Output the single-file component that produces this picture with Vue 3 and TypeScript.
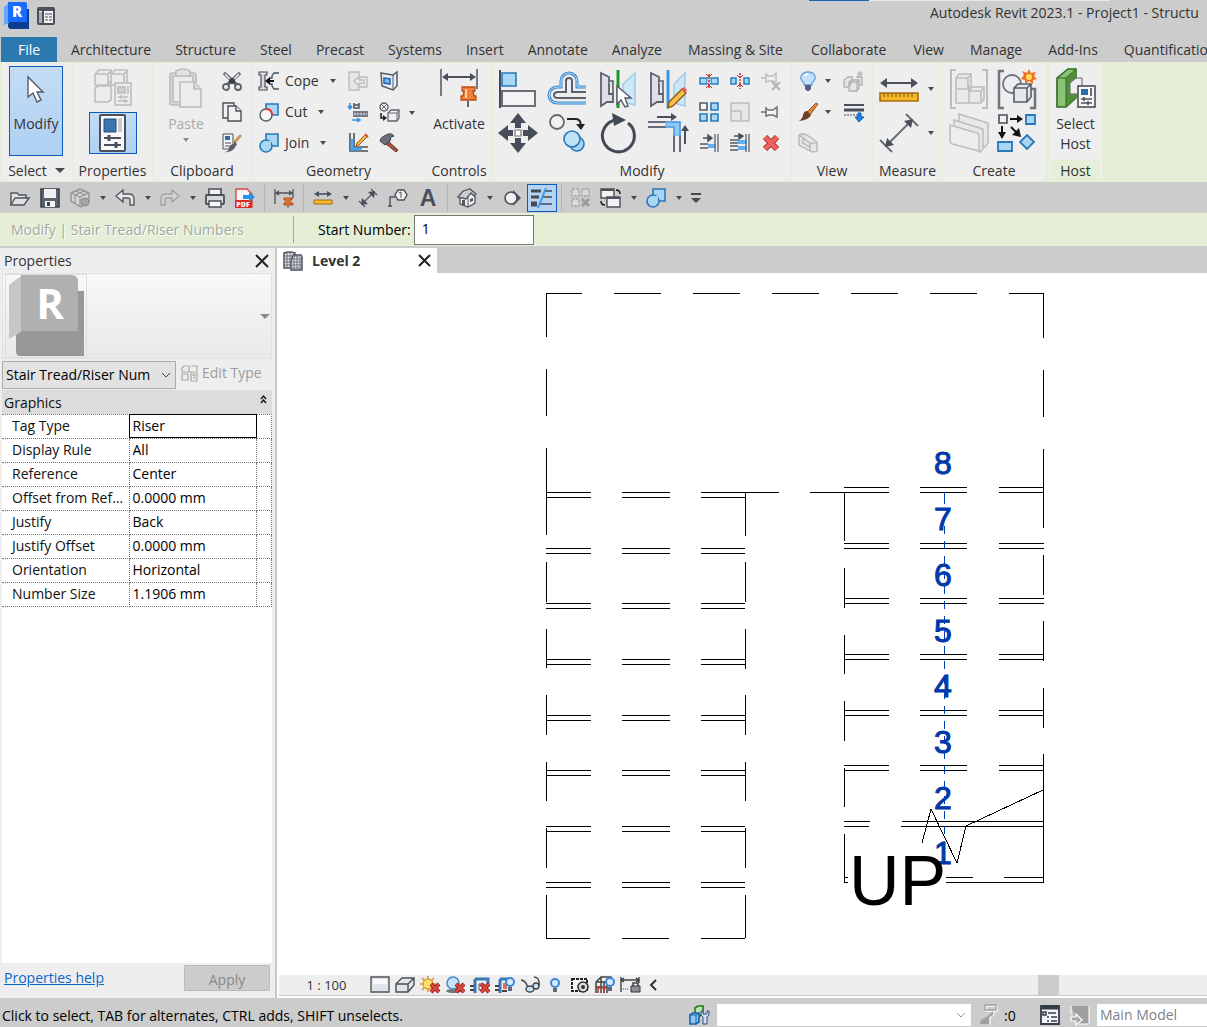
<script setup lang="ts">
import { h, ref } from 'vue'

type Glyph = [number, number, string]

const D = '#4a4f5b'
const B = '#2a78b8'
const L = '#a9d6f3'
const G = '#bdbdbd'
const redX = (x: number, y: number) =>
  `<path d="M${x} ${y}l8 8m0-8l-8 8" stroke="#9c2320" stroke-width="4"/><path d="M${x} ${y}l8 8m0-8l-8 8" stroke="#e2483f" stroke-width="2"/>`
const bulb = (x: number, y: number) =>
  `<circle cx="${x}" cy="${y}" r="4" fill="#d6ebff" stroke="#3b86d8" stroke-width="2"/><path d="M${x - 2} ${y + 5}h4v4h-4z" fill="#5d6a80"/>`

const glyphs: Record<string, Glyph> = {
  revit: [25, 28, `<path d="M4 7h21v20H6l-2-2z" fill="#0a3d91"/><path d="M0 5l5-4v20l-5 2z" fill="#6aa5f5"/><path d="M4 0h17q2 0 2 2v18H4z" fill="#186bff"/><text x="13" y="15" text-anchor="middle" font-family="Open Sans" font-weight="800" font-size="15" fill="#fff">R</text>`],
  revitGrey: [80, 82, `<path d="M10 16h68v65H14q-4 0-4-5z" fill="#979797"/><path d="M3 10l12-9v56L3 64z" fill="#c6c6c6"/><path d="M15 0h50q7 0 7 7v49H15z" fill="#b0b0b0"/><text x="44" y="44" text-anchor="middle" font-family="Open Sans" font-weight="700" font-size="42" fill="#fff">R</text>`],
  menuPanel: [18, 18, `<rect x="1" y="1" width="16" height="16" rx="1" fill="#f2f2f2" stroke="${D}" stroke-width="2"/><path d="M1 3h16M6 2v15" stroke="${D}" stroke-width="2"/><path d="M2 5h3v11H2z" fill="#a9adb5"/><path d="M8 7h7M8 10h3M12 10h3M8 13h3M12 13h3" stroke="${D}" stroke-width="1"/>`],
  cursor: [20, 28, `<path d="M2 1v20l5-4 4 9 4-2-4-8h6z" fill="#fff" stroke="#555a66" stroke-width="1.4"/>`],
  typeProps: [38, 38, `<g fill="#ececec" stroke="${G}" stroke-width="1.6"><path d="M1 6l4-4h12v11l-3 4H1zM17 6l4-4h12v12l-3 3H17zM1 20l3-2h13v14l-3 2H1z"/><path d="M1 6h13l3-4M14 6v11M17 6h13l3-4M30 6v9"/><rect x="21" y="15" width="16" height="22"/><path d="M24 19h7v6h-7z" fill="#cfcfcf"/><path d="M34 18v8M24 29h10M24 33h10M27 27v4M31 31v4"/></g>`],
  propPalette: [28, 38, `<rect x="1" y="1" width="25" height="36" rx="1" fill="#f8f8f8" stroke="${D}" stroke-width="2"/><path d="M5 5h12v13H5z" fill="#3b75b0" stroke="#234c80"/><path d="M19 4h4v14h-4z" fill="#c9c9cf"/><path d="M5 24h17M5 31h17" stroke="${D}" stroke-width="2"/><path d="M10 21v6M17 28v6" stroke="${D}" stroke-width="3"/>`],
  paste: [34, 40, `<g stroke="${G}" stroke-width="1.6" fill="#dadada"><rect x="1" y="5" width="26" height="32" rx="2"/><path d="M4 8h20v26H4z" fill="#ececec"/><path d="M7 3q7-4 14 0v5H7z" fill="#e4e4e4"/><path d="M11 14h14l7 7v18H11z" fill="#ededed"/><path d="M25 14v7h7"/></g>`],
  scissors: [20, 20, `<path d="M2 2l13 12M18 2L5 14" stroke="#5d616b" stroke-width="3.500"/><path d="M3 3l9 9M17 3l-9 9" stroke="#eceef1" stroke-width="1.600"/><circle cx="10" cy="10" r="3" fill="#3a3e48"/><ellipse cx="4" cy="16" rx="3" ry="3" fill="#eee" stroke="#5d616b" stroke-width="1.8"/><ellipse cx="16" cy="16" rx="3" ry="3" fill="#eee" stroke="#5d616b" stroke-width="1.8"/>`],
  copy: [20, 20, `<g fill="#f1f1f1" stroke="${D}" stroke-width="1.4"><path d="M1 1h11v15H1z"/><path d="M6 4h8l5 5v10H6z"/><path d="M14 4v5h5"/></g>`],
  matchType: [20, 20, `<path d="M1 1h10v15H1z" fill="#f4f4f4" stroke="${D}"/><path d="M3 3h5v4H3z" fill="#2d6cab"/><path d="M3 10h6M3 13h5" stroke="${D}"/><path d="M19 2l-8 9" stroke="#c79b62" stroke-width="3"/><path d="M12 8l3 3-3 5q-4 4-9 3 4-1 4-4 1-4 5-4z" fill="#5a5e66"/>`],
  cope: [20, 20, `<path d="M0 1h8v3H6v12h2v3H0v-3h2V4H0z" fill="#d8dadf" stroke="${D}" stroke-width="1.2"/><path d="M20 2h-5l-2 3v2h-2M20 18h-5l-2-3v-2h-2" fill="none" stroke="${D}" stroke-width="1.3"/><path d="M8 10h7" stroke="#111" stroke-width="2"/><path d="M6 10l5-4v8z" fill="#111"/>`],
  cut: [20, 20, `<path d="M7 2h12v11H7z" fill="${L}" stroke="${B}" stroke-width="1.6"/><circle cx="7" cy="13" r="6" fill="#f6f6f6" stroke="#585c66" stroke-width="1.4"/><path d="M7 7q6 0 6 6" stroke="#e53935" stroke-width="2" fill="none"/>`],
  join: [20, 20, `<path d="M7 1h12v12H7z" fill="${L}" stroke="${B}" stroke-width="1.6"/><circle cx="7" cy="13" r="6" fill="${L}" stroke="${B}" stroke-width="1.6"/><path d="M8 8h4v4H8z" fill="${L}"/>`],
  uncope: [20, 20, `<g fill="#e6e6e6" stroke="${G}" stroke-width="1.4"><path d="M1 1h10v5h8v10h-8v3H1z"/><path d="M6 10l5-4v3h5v3h-5v3z" fill="#f1f1f1"/></g>`],
  wallOpening: [20, 20, `<path d="M2 2l12 2 4-3v14l-4 4L3 15z" fill="#e9ecf0" stroke="#565b66" stroke-width="1.5"/><path d="M14 4v15" stroke="#565b66"/><path d="M5 7l6 1v5l-6-1z" fill="#7fb8e8" stroke="#1f66b0" stroke-width="1.5"/>`],
  beamOffset: [20, 20, `<path d="M2 1v5M0 4l2 3 2-3" stroke="#2f8de0" fill="none" stroke-width="1.5"/><path d="M6 1v5h5V1M6 3h5" stroke="${D}" fill="none" stroke-width="1.4"/><path d="M5 9h15v6H5z" fill="#777c87"/><path d="M6 12h13" stroke="#fff" stroke-dasharray="2 1"/><path d="M4 18h7M9 16l3 2-3 2" stroke="#2f8de0" fill="none" stroke-width="1.4"/>`],
  splitFace: [20, 20, `<circle cx="5" cy="5" r="4" fill="#eee" stroke="#62666f" stroke-width="1.5"/><path d="M2 2l6 6M8 2L2 8" stroke="#62666f"/><path d="M9 11l3-3h8v8l-2 3H9z" fill="#f0f0f0" stroke="#62666f" stroke-width="1.3"/><path d="M9 11h9l2-3M18 11v8" stroke="#62666f" stroke-width="1"/><path d="M2 11v5h3" stroke="#222" stroke-width="1.6" fill="none"/><path d="M4 13l4 3-4 3z" fill="#222"/>`],
  wallJoins: [20, 20, `<path d="M2 0v18h18M6 0v14h14" fill="none" stroke="${D}" stroke-width="1.6"/><path d="M4 6v10h10" fill="none" stroke="#4aa3e8" stroke-width="3"/><path d="M9 10L17 2l2 2-8 8-3 1z" fill="#f4b942" stroke="#a35c16"/><path d="M17 1l3 3" stroke="#e04a3a" stroke-width="2"/>`],
  hammer: [20, 20, `<path d="M9 8l10 9-2 2L7 11z" fill="#a4543a" stroke="#713420"/><path d="M1 8q0-3 4-5l4-2q4-1 6 2l-3 1-1 4-5 4z" fill="#6a6e77" stroke="#41444c"/>`],
  activate: [40, 40, `<path d="M2 1v27M38 1v20" stroke="#777b85" stroke-width="2"/><path d="M5 9h30" stroke="${D}" stroke-width="2"/><path d="M3 9l6-4v8zM37 9l-6-4v8z" fill="${D}"/><path d="M23 19h13v4h-2l1 5h2v4H22v-4h2l1-5h-2z" fill="#f08037" stroke="#b5501a" stroke-width="1.3"/><path d="M29 33v6" stroke="#666" stroke-width="2"/><path d="M27 21v9" stroke="#ffd0a8" stroke-width="2"/>`],
  align: [40, 40, `<path d="M2 1v38" stroke="#444a55" stroke-width="2"/><path d="M4 4h14v13H4z" fill="${L}" stroke="${B}" stroke-width="1.6"/><path d="M4 22h33v15H4z" fill="#f3f3f3" stroke="#6b6f78" stroke-width="2"/>`],
  offset: [40, 40, `<path d="M38 18h-9V12a8 8 0 0 0-16 0v6h-4a8 8 0 0 0 0 16h29" fill="none" stroke="#3688cf" stroke-width="3"/><path d="M38 18h-9V12a8 8 0 0 0-16 0v6h-4a8 8 0 0 0 0 16h29" fill="none" stroke="#bfe1fa" stroke-width="1"/><path d="M38 23h-14V12a3 3 0 0 0-6 0v11h-8q-4 0-4 3t4 3h28" fill="none" stroke="#5d616b" stroke-width="2"/>`],
  mirrorPick: [40, 40, `<path d="M3 4l8 4v17h4v8h-6l-6 4z" fill="#dcdfe4" stroke="#5c606b" stroke-width="1.8"/><path d="M11 12h4v13" fill="#dcdfe4" stroke="#5c606b" stroke-width="1.600"/><path d="M37 4l-12 11v18l12 3z" fill="#cfe6f6" stroke="#9fcdeb" stroke-width="1.6"/><path d="M20 1v38" stroke="#189a2b" stroke-width="3"/><path d="M19 17v18l4-4 4 7 3-1-3-8h6z" fill="#fff" stroke="#555a66" stroke-width="1.4"/>`],
  mirrorDraw: [40, 40, `<path d="M3 4l8 4v17h4v8h-6l-6 4z" fill="#dcdfe4" stroke="#5c606b" stroke-width="1.8"/><path d="M11 12h4v13" fill="#dcdfe4" stroke="#5c606b" stroke-width="1.600"/><path d="M37 4l-11 11v19l11 3z" fill="#cfe6f6" stroke="#9fcdeb" stroke-width="1.6"/><path d="M20 1v38" stroke="#3896e4" stroke-width="3"/><path d="M21 33l13-13 4 4-13 13-5 2z" fill="#f6bf45" stroke="#8c5a17" stroke-width="1.4"/><path d="M33 20l3-2 3 3-2 3z" fill="#e05d50"/>`],
  move: [40, 40, `<path d="M20 0l8 10h-5v5h-6v-5h-5zM20 40l8-10h-5v-5h-6v5h-5zM0 20l10-8v5h5v6h-5v5zM40 20l-10-8v5h-5v6h5v5z" fill="#474d59"/><path d="M17 17h6v6h-6z" fill="#fff" stroke="#777" stroke-width="1.2"/>`],
  copyTool: [40, 40, `<circle cx="9" cy="9" r="7" fill="#f1f1f1" stroke="#646872" stroke-width="1.8"/><path d="M19 6h9q5 0 5 8" fill="none" stroke="#222" stroke-width="2"/><path d="M28 11h9l-4 6z" fill="#222"/><circle cx="29" cy="31" r="7" fill="${L}" stroke="${B}" stroke-width="1.6"/><circle cx="24" cy="26" r="8" fill="#bfe2f8" stroke="${B}" stroke-width="1.6"/>`],
  rotate: [40, 40, `<path d="M30 10a16 16 0 1 1-12-3" fill="none" stroke="#444a55" stroke-width="3"/><path d="M14 0l14 7-12 6z" fill="#444a55"/>`],
  trim: [40, 40, `<path d="M0 9h18M0 14h18M26 22v17M32 22v17" stroke="#666b75" stroke-width="2"/><path d="M17 11h12v12" fill="none" stroke="#8cc8f8" stroke-width="5"/><path d="M17 9h15v14M17 14h9v9" fill="none" stroke="#3f98e6" stroke-width="1.600"/><path d="M9 4h16M37 31V16" stroke="${D}" stroke-width="2"/><path d="M23 0l6 4-6 4zM33 18l4-6 4 6z" fill="${D}"/>`],
  split: [20, 20, `<path d="M1 7h7v6H1zM12 7h7v6h-7z" fill="#a5d8f5" stroke="#2980bd" stroke-width="1.5"/><path d="M8 8h4v4H8z" fill="#a5d8f5"/><path d="M10 3v14" stroke="#c62828" stroke-width="1.4" stroke-dasharray="2 1"/><path d="M7 3l3 3 3-3M7 17l3-3 3 3" stroke="#c62828" fill="none"/>`],
  splitGap: [20, 20, `<path d="M1 7h5v6H1zM14 7h5v6h-5z" fill="#a5d8f5" stroke="#2980bd" stroke-width="1.5"/><path d="M10 2v16" stroke="#c62828" stroke-width="1.4" stroke-dasharray="2 1"/><path d="M7 4l3 3 3-3M7 16l3-3 3 3" stroke="#c62828" fill="none"/>`],
  unpin: [20, 20, `<path d="M0 7h5M5 2v10M5 4l3 1h4l3-3v10l-3-2H8l-3 1" fill="#eee" stroke="${G}" stroke-width="1.4"/><path d="M11 11l8 8m0-8l-8 8" stroke="#b5b5b5" stroke-width="2"/>`],
  array: [20, 20, `<g stroke-width="1.6"><path d="M1 1h7v7H1z" fill="#f5f5f5" stroke="#555a64"/><path d="M12 1h7v7h-7zM1 12h7v7H1zM12 12h7v7h-7z" fill="${L}" stroke="${B}"/></g>`],
  scale: [20, 20, `<path d="M1 1h18v18H1zM1 9h10v10H1z" fill="#e6e6e6" stroke="${G}" stroke-width="1.6"/>`],
  pin: [20, 20, `<path d="M0 10h5M5 5v10M5 7l3 1h4l4-3v10l-4-2H8l-3 1" fill="#f4f4f4" stroke="#6b6f79" stroke-width="1.5"/>`],
  trimSingle: [20, 20, `<path d="M1 11h8M1 15h8" stroke="#555a64" stroke-width="1.6"/><path d="M9 13h8" stroke="#5db1f5" stroke-width="4"/><path d="M16 1v18M19 1v18" stroke="#666b75" stroke-width="1.4"/><path d="M4 5h6M9 2l4 3-4 3z" stroke="${D}" stroke-width="1.4" fill="${D}"/>`],
  trimMulti: [20, 20, `<path d="M0 7h8M0 10h8M0 13h8M0 17h8" stroke="#555a64" stroke-width="1.5"/><path d="M8 9h9M8 15h9" stroke="#5db1f5" stroke-width="4"/><path d="M16 1v18M19 1v18" stroke="#666b75" stroke-width="1.4"/><path d="M4 3h6M9 1l4 2-4 3z" stroke="${D}" stroke-width="1.4" fill="${D}"/>`],
  remove: [20, 20, `<path d="M4 4l12 12M16 4L4 16" stroke="#a32825" stroke-width="6"/><path d="M4 4l12 12M16 4L4 16" stroke="#f0625b" stroke-width="4"/>`],
  lamp: [20, 20, `<path d="M6 12Q2 9 3 5q2-4 7-4t7 4q1 4-3 7v2H6z" fill="#c4e0fb" stroke="#6ea3dc" stroke-width="1.4"/><path d="M7 5q1-2 3-2" stroke="#fff" stroke-width="2" fill="none"/><path d="M7 14h6v4l-2 2H9l-2-2z" fill="#55617a"/>`],
  brush: [20, 20, `<path d="M18 1l-9 9 3 3 8-11z" fill="#d98a3a" stroke="#92551f"/><path d="M9 9l4 4q-2 5-12 6 4-3 4-6 1-4 4-4z" fill="#6b3f25"/>`],
  boxOff: [20, 20, `<path d="M1 2q4-2 8 0l10 7v9q-4 2-7 0L1 12zM1 2l11 8v8M12 10q4 1 7-1M5 5v5l7 4" fill="#e6e6e6" stroke="#b5b5b5" stroke-width="1.3"/>`],
  displace: [20, 20, `<path d="M0 9l4-3h4v4l-3 6H0zM5 11l3-2h7v8l-2 3H5zM5 11h8l2-2M13 11v9M12 6h6v8h-3" fill="#e4e4e4" stroke="#b3b3b3" stroke-width="1.4"/><path d="M16 0v6M13 3h6M14 1l4 4M18 1l-4 4" stroke="#b3b3b3" stroke-width="1"/>`],
  linework: [20, 20, `<path d="M0 3h20" stroke="${D}" stroke-width="2"/><path d="M0 8h20" stroke="${D}" stroke-width="3"/><path d="M0 13h14" stroke="${D}" stroke-dasharray="2 1"/><path d="M14 11h3v4h3l-5 5-4-5h3z" fill="#2582e0" stroke="#0f5dad"/>`],
  measure: [40, 40, `<path d="M4 14h32" stroke="${D}" stroke-width="2"/><path d="M1 14l7-5v10zM39 14l-7-5v10z" fill="${D}"/><path d="M1 24h38v8H1z" fill="#f5b926" stroke="#a86b17" stroke-width="1.6"/><path d="M5 24v4m4-4v4m4-4v4m4-4v4m4-4v4m4-4v4m4-4v4m4-4v4" stroke="#7d5212" stroke-width="1"/>`],
  dimension: [40, 40, `<path d="M7 33L33 7M27 1l12 12M1 27l12 12" stroke="#6a6e78" stroke-width="2"/><path d="M6 34l2-9 7 7zM34 6l-2 9-7-7z" fill="${D}"/>`],
  group: [40, 40, `<path d="M7 1H2v38h5M33 1h5v38h-5" fill="none" stroke="${G}" stroke-width="2"/><g fill="#e9e9e9" stroke="${G}" stroke-width="1.6"><path d="M7 9l3-4h12v11l-3 4H7zM7 20h13v14H7zM20 22l3-4h12v12l-3 4H20z"/><path d="M7 9h12l3-4M19 9v11M20 22h12l3-4M32 22v12"/></g>`],
  assembly: [40, 40, `<path d="M7 2H2v37h5M33 20h5v19h-5" fill="none" stroke="#70747e" stroke-width="2.500"/><circle cx="15" cy="15" r="9" fill="#eceef0" stroke="#70747e" stroke-width="1.8"/><path d="M17 19l4-4h13v13l-4 5H17zM17 19h13v14M30 19l4-4" fill="#e6e9ec" stroke="#5a5e68" stroke-width="1.6"/><path d="M32 0l2 4 5-1-2 4 3 3-4 1v4l-4-3-4 3v-4l-4-1 3-4-2-4 5 2z" fill="#f3701e"/><circle cx="32" cy="8" r="3" fill="#ffe15a"/>`],
  parts: [40, 40, `<g fill="#e8e8e8" stroke="${G}" stroke-width="1.5"><path d="M10 1l29 9v20l-3 4L10 22z"/><path d="M5 7l29 9v20l-3 3L5 27z"/><path d="M1 12l27 8q2 1 2 3v15L3 31q-2-1-2-3z" fill="#ededed"/></g>`],
  similar: [40, 40, `<path d="M2 2h8v8H2z" fill="#f0f0f0" stroke="${D}" stroke-width="1.6"/><path d="M29 2h9v9h-9zM1 29h14v9H1zM30 22l7 7-7 7-7-7z" fill="${L}" stroke="${B}" stroke-width="1.8"/><path d="M13 6h9M5 13v8M14 14l6 6" stroke="#111" stroke-width="2"/><path d="M20 2l6 4-6 4zM1 19h8l-4 7zM24 24l-9-2 7-7z" fill="#111"/>`],
  host: [40, 40, `<path d="M1 10L12 1h8v29L10 39H1z" fill="#8cc274" stroke="#2d6b22" stroke-width="1.6"/><path d="M10 10L20 1v29L10 39z" fill="#4f8f3a"/><path d="M1 10h9v29M10 10L20 1" fill="none" stroke="#2d6b22"/><path d="M14 15l6-5h6v16h-12z" fill="#eceef0" stroke="#666"/><rect x="22" y="18" width="17" height="21" fill="#f6f6f6" stroke="${D}" stroke-width="1.6"/><path d="M25 21h7v6h-7z" fill="#2d6cab"/><path d="M35 20v8M25 31h11M25 35h11M28 29v4M32 33v4" stroke="${D}" stroke-width="1.6"/>`],
  open: [20, 20, `<path d="M1 17V5h6l2 2h7v3" fill="#e2e2e2" stroke="#50555f" stroke-width="1.4"/><path d="M5 10h14l-5 7H1z" fill="#dfe2e7" stroke="#50555f" stroke-width="1.4"/>`],
  save: [20, 20, `<path d="M1 1h18v18H1z" fill="#5a6170" stroke="#3c424e" stroke-width="1.6"/><path d="M4 1h12v9H4z" fill="#f0f1f3"/><path d="M5 13h10v6H5z" fill="#f0f1f3"/><path d="M7 14h3v4H7z" fill="#3c424e"/>`],
  sync: [20, 20, `<path d="M1 5l5-2 4-2 4 2 5 2v8l-8 6-5-3-5-3z" fill="#d4d4d4" stroke="#929292" stroke-width="1.4"/><path d="M1 5l9 4 9-4M10 9v10M6 3l9 4M14 3L5 7v8" stroke="#969696" stroke-width="1.2" fill="none"/><circle cx="15" cy="14" r="4" fill="#a5a5a5" stroke="#868686"/>`],
  undo: [20, 20, `<path d="M1 8l7-6v4h6q5 0 5 5v6h-4v-5q0-2-2-2H8v4z" fill="#e7e8ea" stroke="#555a64" stroke-width="1.4"/>`],
  redo: [20, 20, `<path d="M19 8l-7-6v4H6q-5 0-5 5v6h4v-5q0-2 2-2h5v4z" fill="#d2d2d2" stroke="#a2a2a2" stroke-width="1.4"/>`],
  print: [20, 20, `<path d="M4 7V1h12v6" fill="#f3f3f3" stroke="${D}" stroke-width="1.6"/><rect x="1" y="7" width="18" height="9" rx="1" fill="#d8dade" stroke="${D}" stroke-width="1.8"/><path d="M4 13h12v6H4z" fill="#f8f8f8" stroke="${D}" stroke-width="1.4"/>`],
  pdf: [20, 20, `<path d="M1 1h11l5 5v13H1z" fill="#f6f6f6" stroke="#d34a40" stroke-width="1.4"/><path d="M0 12h17v8H0z" fill="#dd2a22"/><text x="8" y="19" text-anchor="middle" font-family="Open Sans" font-weight="800" font-size="7" fill="#fff">PDF</text><path d="M8 7h6V4l6 5-6 5v-3H8z" fill="#2a91e8"/>`],
  dimPin: [20, 20, `<path d="M1 1v15M19 1v9" stroke="#555a64" stroke-width="1.4"/><path d="M2 5h16M5 3L2 5l3 2M15 3l3 2-3 2" stroke="${D}" stroke-width="1.4" fill="none"/><path d="M10 10h8v2h-2v3h3v2H10v-2h2v-3h-2z" fill="#ea6f2c" stroke="#b04d17"/><path d="M14 17v3" stroke="#555"/>`],
  rule: [20, 20, `<path d="M3 6h14" stroke="${D}" stroke-width="1.6"/><path d="M1 6l5-3v6zM19 6l-5-3v6z" fill="${D}"/><path d="M1 12h18v4H1z" fill="#f5b926" stroke="#a86b17"/>`],
  aligned: [20, 20, `<path d="M5 15L15 5M13 1l6 6M1 13l6 6" stroke="#5d626d" stroke-width="1.4"/><path d="M3 17l1-7 6 6zM17 3l-1 7-6-6z" fill="${D}"/>`],
  tag: [20, 20, `<path d="M2 18V9h5M0 18h4" fill="none" stroke="${D}" stroke-width="1.4"/><path d="M10 2h6l3 5-3 5h-6L7 7z" fill="#f1f1f1" stroke="${D}" stroke-width="1.4"/><path d="M11 5l2-1v6" stroke="${D}" fill="none"/>`],
  textA: [20, 20, `<text x="10" y="18" text-anchor="middle" font-family="Liberation Sans" font-weight="700" font-size="23" fill="#4a4f5a">A</text>`],
  home: [20, 20, `<path d="M3 9v7l8 3 7-4V8l-6-5z" fill="#f0f1f3" stroke="#50555f" stroke-width="1.3"/><path d="M1 9l5-6 7-2 6 5-2 2-3-3-5 6z" fill="#c9ccd1" stroke="#50555f" stroke-width="1.3"/><path d="M11 9v10" stroke="#50555f"/><path d="M5 12h3v5H5z" fill="#50555f"/><path d="M13 11l3-1v3l-3 1z" fill="#50555f"/>`],
  section: [20, 20, `<path d="M11 2l8 8-8 8z" fill="${D}"/><circle cx="9" cy="10" r="6" fill="#eeeff1" stroke="${D}" stroke-width="1.6"/>`],
  thin: [22, 20, `<path d="M0 3h10M0 9h8" stroke="#444a55" stroke-width="3"/><path d="M0 16h6" stroke="#444a55" stroke-width="5"/><path d="M13 3h8M12 9h9M9 16h12" stroke="#444a55" stroke-width="1.4"/><path d="M15 0L7 20" stroke="#3c97e8" stroke-width="2"/>`],
  closeHidden: [20, 20, `<path d="M1 1h7v7H1zM11 1h7v7h-7zM1 11h7v7H1z" fill="#d9d9d9" stroke="#a6a6a6" stroke-width="1.3" stroke-dasharray="3 1"/><path d="M11 11l7 7m0-7l-7 7" stroke="#9a9a9a" stroke-width="3"/>`],
  switchWin: [22, 20, `<path d="M1 1h13v9H1zM7 9h13v10H7z" fill="#f2f2f2" stroke="${D}" stroke-width="1.4"/><path d="M1 2h13M7 10h13" stroke="${D}" stroke-width="2"/><path d="M16 2q4 0 4 4M5 17q-4 0-4-4" fill="none" stroke="#111" stroke-width="1.4"/>`],
  plan: [20, 20, `<path d="M1 2q5-2 11 0v15H1z" fill="#e6e8eb" stroke="${D}" stroke-width="1.5"/><path d="M10 4h8l1 2v13H8v-9z" fill="#e6e8eb" stroke="${D}" stroke-width="1.5"/><path d="M2 5h15M2 8h16M2 11h16M2 14h16M9 17h9M4 2v15M7 2v15M11 5v13M14 5v13M17 6v12" stroke="#6b707b" stroke-width="1"/>`],
  editType: [17, 17, `<path d="M1 3l2-2h5v6H1zM10 1h6v5M1 9h6v6H1zM10 7h6v9h-6z" fill="none" stroke="#a9a9a9" stroke-width="1.2"/><path d="M12 9h2v2h-2zM12 13h3" stroke="#a9a9a9" fill="none"/>`],
  detail: [20, 18, `<path d="M1 1h18v15H1z" fill="#dfe4ec" stroke="#555" stroke-width="1.4"/><path d="M3 3h14v5H3z" fill="#f7f9fb"/>`],
  cube: [20, 18, `<path d="M1 8l6-6h12v7l-6 7H1zM1 8h12v8M13 8l6-6" fill="#e3e6ea" stroke="#4c4f55" stroke-width="1.4"/>`],
  sun: [20, 18, `<path d="M8 0v16M0 8h16M2 2l12 12M14 2L2 14" stroke="#e29a2b" stroke-width="1.6"/><circle cx="8" cy="8" r="5" fill="#ffe069" stroke="#c98420"/>${redX(11, 8)}`],
  shadow: [20, 18, `<ellipse cx="9" cy="15" rx="8" ry="2" fill="#777"/><circle cx="8" cy="7" r="6" fill="#c7e4fa" stroke="#4687c5" stroke-width="1.5"/>${redX(11, 8)}`],
  crop: [20, 18, `<path d="M5 3h13v7M5 3v14" stroke="#3a79b8" stroke-width="3" fill="none"/><path d="M0 10h4M0 14h4" stroke="#444" stroke-width="2"/><path d="M9 8h5v6H9z" fill="#e9eef4" stroke="#555"/>${redX(11, 8)}`],
  cropShow: [20, 18, `<path d="M5 3h9M5 3v14" stroke="#3a79b8" stroke-width="3" fill="none"/><path d="M0 10h4M0 14h4M7 15h5" stroke="#444" stroke-width="2"/><path d="M8 7h4v6H8z" fill="#e86b60"/>${bulb(15, 6)}`],
  glasses: [20, 18, `<path d="M1 4q4 0 7 7M14 1q6 0 5 9" fill="none" stroke="#42464e" stroke-width="1.5"/><ellipse cx="10" cy="13" rx="4" ry="3" fill="#c8e2f0" stroke="#42464e" stroke-width="1.4"/><ellipse cx="16" cy="10" rx="3" ry="3" fill="#c8e2f0" stroke="#42464e" stroke-width="1.4"/>`],
  reveal: [20, 18, bulb(10, 7)],
  temp: [20, 18, `<path d="M2 3h15v12H2z" fill="#f4f4f4" stroke="#222" stroke-width="2" stroke-dasharray="3 1"/><circle cx="13" cy="11" r="5" fill="#ddd" stroke="#333" stroke-width="1.6"/><circle cx="13" cy="11" r="2" fill="#333"/>`],
  analytic: [20, 18, `<path d="M1 6l5-5h10v6M1 6v11M1 6h11v11M1 11h11M6 1v16M9 6v11" stroke="#444" fill="none" stroke-width="1.5"/><path d="M3 10v7M9 10v7M3 12h8" stroke="#c23a33" stroke-width="1.6" fill="none"/>${bulb(15, 6)}`],
  constraints: [20, 18, `<path d="M1 1v15M19 1v6M1 4h18M4 2L1 4l3 2M16 2l3 2-3 2" stroke="#444" stroke-width="1.4" fill="none"/><path d="M1 13h8" stroke="#444" stroke-dasharray="1 1"/><path d="M13 10V7h5v3" fill="none" stroke="#444" stroke-width="1.6"/><path d="M11 10h9v6h-9z" fill="#8b8f96" stroke="#333"/>`],
  workset: [20, 20, `<path d="M6 3l3-2h5v6l-3 4H6z" fill="#c3e3b6" stroke="#1f7a1a" stroke-width="1.6"/><path d="M1 10l3-2h6v9l-3 2H1z" fill="#8ec8ef" stroke="#0f62ad" stroke-width="1.6"/><path d="M1 10h6v9M7 10l3-2" fill="none" stroke="#0f62ad"/><path d="M12 6v4l2 2v7h4v-7l2-2V6h-2v3h-4V6z" fill="#d6dced" stroke="#2c4c86"/>`],
  filter: [20, 20, `<path d="M6 1h11v5H6z" fill="#cfcfcf" stroke="#fff" stroke-width="1.4"/><path d="M5 0h11v5H5z" fill="none" stroke="#a0a0a0" stroke-width="1.4"/><path d="M13 6v4l-4 2v7H0q0-5 5-6l4-3z" fill="#a0a0a0"/><path d="M14 6v4l-4 3v7" fill="none" stroke="#fff"/>`],
  selList: [20, 20, `<path d="M1 1h18v18H1z" fill="#f2f4f7" stroke="#343b4a" stroke-width="1.8"/><path d="M1 3h18" stroke="#343b4a" stroke-width="3"/><path d="M3 7h3v3H3zM8 8h8M7 12h2M11 12h6M7 16h2M11 16h6" stroke="#343b4a" stroke-width="1.5" fill="none"/>`],
  exclude: [20, 20, `<path d="M1 1h18v18H8" fill="#9f9f9f"/><path d="M1 1v9M19 1v18H9" stroke="#fff" fill="none"/><path d="M1 12h5V9l6 6-6 5v-4H1z" fill="#a7a7a7" stroke="#fff" stroke-width="1.2"/>`]
}

const Icon = (props: { name: string }) => {
  const [w, ht, body] = glyphs[props.name]
  return h('svg', { class: 'glyph', width: w, height: ht, viewBox: `0 0 ${w} ${ht}`, fill: 'none', 'aria-hidden': 'true', innerHTML: body })
}
Icon.props = ['name']

const tabs = ['Architecture', 'Structure', 'Steel', 'Precast', 'Systems', 'Insert', 'Annotate', 'Analyze', 'Massing & Site', 'Collaborate', 'View', 'Manage', 'Add-Ins', 'Quantification']
const largeTools = ['align', 'offset', 'mirrorPick', 'mirrorDraw', 'move', 'copyTool', 'rotate', 'trim']
const smallTools = ['split', 'splitGap', 'unpin', 'array', 'scale', 'pin', 'trimSingle', 'trimMulti', 'remove']
const geometryTools = [
  { icon: 'cope', label: 'Cope' },
  { icon: 'cut', label: 'Cut' },
  { icon: 'join', label: 'Join' }
]
const geometryExtra = ['uncope', 'wallOpening', 'beamOffset', 'splitFace', 'wallJoins', 'hammer']
const quickTools = ['open', 'save', 'sync', '^', 'undo', '^', 'redo', '^', 'print', 'pdf', '|', 'dimPin', '|', 'rule', '^', 'aligned', 'tag', 'textA', '|', 'home', '^', 'section', 'thin', '|', 'closeHidden', 'switchWin', '^', 'join', '^', '=']
const viewTools = ['detail', 'cube', 'sun', 'shadow', 'crop', 'cropShow', 'glasses', 'reveal', 'temp', 'analytic', 'constraints']

const startNumber = ref('1')
const rows = ref([
  { name: 'Tag Type', value: 'Riser' },
  { name: 'Display Rule', value: 'All' },
  { name: 'Reference', value: 'Center' },
  { name: 'Offset from Ref...', value: '0.0000 mm' },
  { name: 'Justify', value: 'Back' },
  { name: 'Justify Offset', value: '0.0000 mm' },
  { name: 'Orientation', value: 'Horizontal' },
  { name: 'Number Size', value: '1.1906 mm' }
])

// Stair plan: [x1, x2, y] for horizontal strokes and [x, y1, y2] for vertical ones,
// measured from the top-left corner of the landing.
type Span = [number, number, number]
const acrossLines: Span[] = [
  [0, 36, 0], [68, 115, 0], [147, 194, 0], [226, 273, 0], [305, 352, 0], [384, 431, 0], [463, 498, 0],
  [199, 233, 199], [264, 299, 199],
  [298, 324, 528], [356, 498, 528], [298, 323, 533], [355, 498, 533],
  [298, 302, 584], [400, 427, 584], [458, 498, 584], [298, 302, 589], [400, 498, 589],
  [0, 44, 645], [76, 123, 645], [155, 199, 645]
]
for (const y of [199, 255, 310, 366, 422, 477, 533, 589]) {
  for (const dy of [0, 5]) acrossLines.push([0, 45, y + dy], [76, 124, y + dy], [155, 199, y + dy])
}
for (const y of [194, 250, 305, 361, 417, 472]) {
  for (const dy of [0, 5]) acrossLines.push([298, 343, y + dy], [374, 421, y + dy], [453, 498, y + dy])
}
const downLines: Span[] = [
  [0, 0, 44], [0, 76, 123], [0, 155, 242], [0, 269, 309], [0, 336, 375], [0, 402, 442], [0, 469, 508], [0, 535, 575], [0, 602, 646],
  [199, 199, 243], [199, 269, 309], [199, 336, 376], [199, 402, 442], [199, 469, 508], [199, 535, 575], [199, 602, 645],
  [298, 199, 248], [298, 275, 315], [298, 342, 381], [298, 408, 448], [298, 475, 514], [298, 541, 590],
  [497, 0, 45], [497, 77, 124], [497, 156, 235], [497, 262, 302], [497, 328, 368], [497, 395, 435], [497, 461, 590]
]
const centreDashes: Span[] = [[398, 199, 211]]
for (let y = 233; y < 548; y += 15) centreDashes.push([398, y, y + 8])
const risers = [[8, 181], [7, 237], [6, 293], [5, 349], [4, 404], [3, 460], [2, 516], [1, 571]]
</script>

<template>
  <div class="app">
    <header class="titlebar">
      <Icon name="revit" />
      <button class="bare" aria-label="Menu panel"><Icon name="menuPanel" /></button>
      <span class="title">Autodesk Revit 2023.1 - Project1 - Structu</span>
    </header>

    <nav class="tabs">
      <button class="file">File</button>
      <button v-for="t in tabs" :key="t">{{ t }}</button>
    </nav>

    <section class="ribbon">
      <div class="panel p-select">
        <div class="body"><button class="modify"><Icon name="cursor" /><span>Modify</span></button></div>
        <div class="caption">Select <i class="caret big"></i></div>
      </div>
      <div class="panel p-props">
        <div class="body stack">
          <button class="bare tall" aria-label="Type properties"><Icon name="typeProps" /></button>
          <button class="active-tool" aria-label="Properties"><Icon name="propPalette" /></button>
        </div>
        <div class="caption">Properties</div>
      </div>
      <div class="panel p-clip">
        <div class="body">
          <button class="big-tool off"><Icon name="paste" /><span>Paste</span><i class="caret"></i></button>
          <div class="small-grid one">
            <button v-for="n in ['scissors', 'copy', 'matchType']" :key="n" :aria-label="n"><Icon :name="n" /></button>
          </div>
        </div>
        <div class="caption">Clipboard</div>
      </div>
      <div class="panel p-geo">
        <div class="body">
          <div class="rows">
            <button v-for="g in geometryTools" :key="g.label"><Icon :name="g.icon" />{{ g.label }}<i class="caret"></i></button>
          </div>
          <div class="small-grid two">
            <button v-for="n in geometryExtra" :key="n" :aria-label="n"><Icon :name="n" /></button>
          </div>
          <i class="caret"></i>
        </div>
        <div class="caption">Geometry</div>
      </div>
      <div class="panel p-ctrl">
        <div class="body"><button class="big-tool"><Icon name="activate" /><span>Activate</span></button></div>
        <div class="caption">Controls</div>
      </div>
      <div class="panel p-mod">
        <div class="body">
          <div class="large-grid four">
            <button v-for="n in largeTools" :key="n" :aria-label="n"><Icon :name="n" /></button>
          </div>
          <div class="small-grid three">
            <button v-for="n in smallTools" :key="n" :aria-label="n"><Icon :name="n" /></button>
          </div>
        </div>
        <div class="caption">Modify</div>
      </div>
      <div class="panel p-view">
        <div class="body">
          <div class="rows icons">
            <button aria-label="Hide"><Icon name="lamp" /><i class="caret"></i></button>
            <button aria-label="Override"><Icon name="brush" /><i class="caret"></i></button>
            <button aria-label="Selection box"><Icon name="boxOff" /></button>
          </div>
          <div class="small-grid one">
            <button aria-label="Displace"><Icon name="displace" /></button>
            <button aria-label="Linework"><Icon name="linework" /></button>
          </div>
        </div>
        <div class="caption">View</div>
      </div>
      <div class="panel p-meas">
        <div class="body">
          <div class="large-grid carets">
            <button aria-label="Measure"><Icon name="measure" /><i class="caret"></i></button>
            <button aria-label="Dimension"><Icon name="dimension" /><i class="caret"></i></button>
          </div>
        </div>
        <div class="caption">Measure</div>
      </div>
      <div class="panel p-create">
        <div class="body">
          <div class="large-grid two">
            <button v-for="n in ['group', 'assembly', 'parts', 'similar']" :key="n" :aria-label="n"><Icon :name="n" /></button>
          </div>
        </div>
        <div class="caption">Create</div>
      </div>
      <div class="panel p-host">
        <div class="body"><button class="big-tool"><Icon name="host" /><span>Select<br />Host</span></button></div>
        <div class="caption">Host</div>
      </div>
    </section>

    <div class="quick">
      <template v-for="(q, i) in quickTools" :key="i">
        <i v-if="q === '|'" class="sep"></i>
        <span v-else-if="q === '^'" class="slot"><i class="caret"></i></span>
        <button v-else-if="q === '='" class="custom" aria-label="Customize"><i class="bar"></i><i class="caret big"></i></button>
        <button v-else :class="{ on: q === 'thin' }" :aria-label="q"><Icon :name="q" /></button>
      </template>
    </div>

    <div class="options">
      <span class="context">Modify | Stair Tread/Riser Numbers</span>
      <label for="start">Start Number:</label>
      <input id="start" v-model="startNumber" type="text" />
    </div>

    <main class="work">
      <aside class="palette">
        <div class="palette-head">
          <span>Properties</span>
          <button class="bare" aria-label="Close properties">
            <svg class="glyph" width="14" height="14" viewBox="0 0 14 14"><path d="M1 1l12 12M13 1L1 13" stroke="#222" stroke-width="2" /></svg>
          </button>
        </div>
        <div class="type-box"><div class="thumb"><Icon name="revitGrey" /></div><i class="caret big pale"></i></div>
        <div class="type-row">
          <div class="pick">
            <select aria-label="Type filter"><option>Stair Tread/Riser Num</option></select>
            <svg class="glyph" width="10" height="6" viewBox="0 0 10 6"><path d="M1 1l4 4 4-4" fill="none" stroke="#444" /></svg>
          </div>
          <button class="edit" disabled><Icon name="editType" />Edit Type</button>
        </div>
        <div class="sheet">
          <table>
            <colgroup><col class="c-name" /><col class="c-value" /><col /></colgroup>
            <thead>
              <tr>
                <th colspan="3"><div class="group-head">Graphics
                  <svg class="glyph" width="7" height="9" viewBox="0 0 7 9"><path d="M1 4l2.500-3L6 4M1 8l2.500-3L6 8" fill="none" stroke="#111" stroke-width="1.4" /></svg>
                </div></th>
              </tr>
            </thead>
            <tbody>
              <tr v-for="(r, i) in rows" :key="r.name">
                <td class="name"><label :for="'prop' + i">{{ r.name }}</label></td>
                <td class="value" :class="{ focus: i === 0 }"><input :id="'prop' + i" v-model="r.value" type="text" /></td>
                <td></td>
              </tr>
            </tbody>
          </table>
        </div>
        <div class="palette-foot">
          <a href="#">Properties help</a>
          <button disabled>Apply</button>
        </div>
      </aside>

      <section class="view">
        <div class="view-tabs">
          <div class="view-tab">
            <Icon name="plan" /><b>Level 2</b>
            <button class="bare" aria-label="Close view">
              <svg class="glyph" width="13" height="13" viewBox="0 0 13 13"><path d="M1 1l11 11M12 1L1 12" stroke="#222" stroke-width="2" /></svg>
            </button>
          </div>
        </div>
        <div class="canvas">
          <svg class="plan" width="100%" height="100%">
            <g transform="translate(269 20)">
              <g fill="#000">
                <rect v-for="(l, i) in acrossLines" :key="'a' + i" :x="l[0]" :y="l[2]" :width="l[1] - l[0]" height="1" />
                <rect v-for="(l, i) in downLines" :key="'d' + i" :x="l[0]" :y="l[1]" width="1" :height="l[2] - l[1]" />
              </g>
              <g class="riser">
                <text v-for="r in risers" :key="r[0]" x="397" :y="r[1]">{{ r[0] }}</text>
              </g>
              <g fill="#003cb4">
                <rect v-for="(l, i) in centreDashes" :key="'c' + i" :x="l[0]" :y="l[1]" width="1" :height="l[2] - l[1]" />
              </g>
              <path d="M376 550L385 516L411 570L420 533L497 497" fill="none" stroke="#000" shape-rendering="crispEdges" />
              <text class="up" x="303" y="612">UP</text>
            </g>
          </svg>
        </div>
        <div class="view-bar">
          <button class="scale">1 : 100</button>
          <button v-for="v in viewTools" :key="v" :aria-label="v"><Icon :name="v" /></button>
          <button class="collapse" aria-label="Collapse"><svg class="glyph" width="8" height="12" viewBox="0 0 8 12"><path d="M7 1L2 6l5 5" fill="none" stroke="#333" stroke-width="2" /></svg></button>
          <div class="track"><i class="grip"></i></div>
        </div>
      </section>
    </main>

    <footer class="status">
      <span class="hint">Click to select, TAB for alternates, CTRL adds, SHIFT unselects.</span>
      <button class="bare" aria-label="Worksets"><Icon name="workset" /></button>
      <div class="workset">
        <select aria-label="Active workset"><option></option></select>
        <svg class="glyph" width="10" height="6" viewBox="0 0 10 6"><path d="M1 1l4 4 4-4" fill="none" stroke="#999" /></svg>
      </div>
      <Icon name="filter" />
      <span class="count">:0</span>
      <button class="bare" aria-label="Editable only"><Icon name="selList" /></button>
      <button class="bare exclude" aria-label="Exclude options"><Icon name="exclude" /></button>
      <select class="model" aria-label="Design option" disabled><option>Main Model</option></select>
    </footer>
  </div>
</template>

<style>
body {
  margin: 0;
  overflow: hidden;
}
</style>

<style scoped>
.app {
  display: flex;
  flex-direction: column;
  height: 100vh;
  background: #ccc;
  color: #333;
  font: 14px/20px 'Open Sans', 'Noto Sans', sans-serif;
  white-space: nowrap;
  overflow: hidden;
}
.app * {
  box-sizing: border-box;
}
.glyph {
  display: block;
  flex: none;
  overflow: visible;
}
button {
  border: 0;
  padding: 0;
  background: none;
  color: inherit;
  font: inherit;
  display: flex;
  align-items: center;
  justify-content: center;
  flex: none;
}
.caret {
  flex: none;
  border: 3px solid transparent;
  border-top: 4px solid #4a4a4a;
  border-bottom: 0;
}
.caret.big {
  border-width: 5px 5px 0;
}
.caret.pale {
  border-top-color: #8c8c8c;
}

.titlebar {
  flex: none;
  height: 37px;
  display: flex;
  align-items: flex-start;
  padding: 2px 0 0 4px;
  gap: 8px;
  background: linear-gradient(#1464b4, #1464b4) 809px 0 / 60px 1px no-repeat, linear-gradient(#e8e8e8, #e8e8e8) 869px 0 / 241px 1px no-repeat, #ccc;
}
.titlebar .bare {
  margin-top: 5px;
}
.title {
  margin-left: auto;
  flex: 0 0 277px;
  line-height: 22px;
}

.tabs {
  flex: none;
  display: flex;
  height: 25px;
  overflow: hidden;
  padding-left: 1px;
}
.tabs button {
  padding: 0 12px;
}
.tabs button:nth-child(n + 10) {
  padding: 0 14px;
}
.tabs button:nth-child(n + 12) {
  padding: 0 13px;
}
.tabs .file {
  width: 56px;
  margin-right: 2px;
  background: #2a7ab0;
  color: #fff;
}

.ribbon {
  flex: none;
  display: flex;
  height: 120px;
  padding: 1px 0 1px 1px;
  gap: 1px;
  background: #e5efd8;
}
.panel {
  flex: none;
  background: #eee;
  display: flex;
  flex-direction: column;
}
.body {
  height: 97px;
  display: flex;
}
.caption {
  height: 21px;
  display: flex;
  align-items: center;
  justify-content: center;
  gap: 8px;
}
.p-select { width: 71px; }
.p-props { width: 79px; }
.p-clip { width: 98px; }
.p-geo { width: 173px; }
.p-ctrl { width: 66px; }
.p-mod { width: 298px; }
.p-view { width: 80px; }
.p-meas { width: 69px; }
.p-create { width: 102px; }
.p-host { width: 53px; margin-left: 3px; }
.p-host .caption { background: #e5efd8; margin: 0 2px; }
.modify {
  width: 54px;
  height: 90px;
  margin: 3px 0 0 8px;
  border: 1px solid #0a5cb8;
  background: linear-gradient(#c4dcf5, #aed0f2);
  flex-direction: column;
  justify-content: flex-start;
  padding-top: 9px;
  gap: 10px;
}
.stack {
  flex-direction: column;
  align-items: center;
  padding-top: 5px;
}
.tall {
  height: 44px;
  align-items: flex-start;
}
.active-tool {
  width: 48px;
  height: 42px;
  border: 1px solid #0a5cb8;
  background: linear-gradient(#c4dcf5, #aed0f2);
}
.big-tool {
  width: 100%;
  height: 97px;
  flex-direction: column;
  justify-content: flex-start;
  padding-top: 5px;
}
.big-tool span {
  margin-top: 6px;
}
.off {
  color: #ababab;
}
.p-clip .big-tool {
  width: 66px;
}
.p-clip .small-grid {
  grid-template-columns: 26px;
}
.off .caret {
  margin-top: 4px;
  border-top-color: #8a8a8a;
}
.small-grid {
  display: grid;
  grid-auto-rows: 31px;
  grid-template-columns: 31px;
  padding-top: 2px;
}
.small-grid button,
.large-grid button {
  height: 100%;
}
.small-grid.two {
  grid-template-columns: 31px 31px;
}
.small-grid.three {
  grid-template-columns: 31px 31px 31px;
}
.large-grid {
  display: grid;
  grid-auto-rows: 44px;
  padding-top: 4px;
}
.large-grid.four {
  grid-template-columns: 50px 50px 50px 50px;
}
.large-grid.two {
  grid-template-columns: 48px 48px;
  padding-left: 2px;
}
.rows {
  display: grid;
  grid-auto-rows: 31px;
  padding: 2px 0 0 7px;
  width: 90px;
}
.rows button {
  justify-content: flex-start;
  gap: 6px;
}
.rows .caret {
  margin-left: 5px;
}
.rows.icons {
  width: 46px;
  padding-left: 6px;
}
.rows.icons .caret {
  margin-left: 1px;
}
.p-geo .body > .caret {
  margin: 48px 0 0 5px;
}
.large-grid.carets {
  padding-left: 6px;
}
.large-grid.carets button {
  gap: 9px;
}

.quick {
  flex: none;
  display: flex;
  align-items: center;
  height: 31px;
  padding-left: 5px;
}
.quick button {
  width: 30px;
  height: 28px;
}
.quick .on {
  border: 1px solid #0a5cb8;
  background: #b5d4f3;
}
.sep {
  width: 1px;
  height: 27px;
  margin: 0 4px;
  background: #b4b4b4;
}
.slot {
  width: 15px;
  display: flex;
  justify-content: center;
}
.quick .custom {
  width: 20px;
  flex-direction: column;
  gap: 3px;
}
.bar {
  width: 10px;
  height: 2px;
  background: #4a4a4a;
}

.options {
  flex: none;
  display: flex;
  align-items: center;
  height: 33px;
  background: #e5efd8;
  color: #000;
}
.context {
  flex: none;
  width: 294px;
  height: 27px;
  line-height: 28px;
  padding-left: 11px;
  margin-right: 24px;
  border-right: 1px solid #a5a5a5;
  color: #a3a8a0;
  text-shadow: 1px 1px #fff;
}
.options label {
  line-height: 22px;
}
.options input {
  width: 120px;
  height: 30px;
  margin-left: 3px;
  padding: 0 7px 3px;
  border: 1px solid #777;
  background: #fff;
  font: inherit;
}

.work {
  flex: 1;
  min-height: 0;
  display: flex;
  padding-top: 2px;
}
.palette {
  flex: none;
  width: 277px;
  border-right: 2px solid #c8c8c8;
  padding: 0 3px 0 2px;
  background: #eee;
  display: flex;
  flex-direction: column;
  color: #111;
}
.palette-head {
  height: 25px;
  padding: 0 3px 0 2px;
  display: flex;
  align-items: center;
  justify-content: space-between;
  color: #333;
}
.type-box {
  height: 86px;
  display: flex;
  align-items: center;
  justify-content: space-between;
  padding: 0 1px 0 2px;
  border: 1px solid #e2e2e2;
  background: linear-gradient(#f8f8f8, #e9e9e9);
}
.thumb {
  border: 1px solid #ddd;
  height: 84px;
}
.type-row {
  display: flex;
  height: 31px;
  align-items: center;
}
.pick,
.workset {
  display: flex;
  align-items: center;
}
.pick .glyph,
.workset .glyph {
  margin-left: -15px;
  pointer-events: none;
}
.pick select {
  appearance: none;
  width: 174px;
  height: 28px;
  padding: 1px 3px 0;
  border: 1px solid #aaa;
  border-radius: 0;
  background: #e2e2e2;
  color: #000;
  font: inherit;
}
.edit {
  margin-left: 10px;
  gap: 4px;
  color: #9c9c9c;
  padding-bottom: 3px;
}
.sheet {
  flex: 1;
  min-height: 0;
  width: 270px;
  background: #fff;
}
table {
  width: 100%;
  table-layout: fixed;
  border-collapse: collapse;
}
.c-name,
.c-value {
  width: 127px;
}
th {
  padding: 0;
  height: 24px;
  background: #dcdcdc;
  font-weight: 400;
}
.group-head {
  display: flex;
  align-items: center;
  justify-content: space-between;
  padding: 2px 5px 0 2px;
}
.group-head .glyph {
  margin-bottom: 7px;
}
td {
  height: 24px;
  padding: 0;
  border: 1px dotted #777;
  border-left: 0;
  line-height: 20px;
}
.name {
  padding-left: 10px;
}
.value input {
  display: block;
  width: 100%;
  height: 22px;
  padding: 0 3px 2px;
  border: 0;
  background: none;
  font: inherit;
  color: #000;
}
.focus input {
  outline: 1px solid #000;
}
.palette-foot {
  display: flex;
  justify-content: space-between;
  align-items: center;
  height: 35px;
  padding: 0 2px 5px;
}
.palette-foot a {
  color: #0a66cc;
}
.palette-foot button {
  width: 86px;
  height: 26px;
  padding-top: 3px;
  border: 1px solid #bcbcbc;
  background: #ccc;
  color: #888;
}

.view {
  flex: 1;
  min-width: 0;
  display: flex;
  flex-direction: column;
  background: #fff;
}
.view-tabs {
  flex: none;
  height: 25px;
  background: #cbcbcb;
  display: flex;
}
.view-tab {
  width: 160px;
  display: flex;
  align-items: center;
  padding: 0 6px;
  background: #fff;
}
.view-tab b {
  margin-left: 9px;
}
.view-tab .bare {
  margin-left: auto;
}
.canvas {
  flex: 1;
  min-height: 0;
}
.plan {
  display: block;
}
.riser text {
  font: 32px 'Liberation Sans', sans-serif;
  fill: #003cb4;
  stroke: #0034a0;
  stroke-width: 1px;
  text-anchor: middle;
}
.up {
  font: 70px 'Liberation Sans', sans-serif;
}
.view-bar {
  flex: none;
  display: flex;
  align-items: center;
  height: 21px;
  margin: 0 0 2px 2px;
  border-bottom: 1px solid #c9c9c9;
  background: #eee;
}
.view-bar button {
  width: 25px;
}
.view-bar .scale {
  width: 88px;
  padding-left: 7px;
  font-size: 13px;
}
.view-bar .collapse {
  width: 21px;
}
.track {
  flex: 1;
  height: 20px;
  display: flex;
  justify-content: flex-end;
}
.grip {
  width: 21px;
  margin-right: 148px;
  background: #ccc;
}

.status {
  flex: none;
  display: flex;
  align-items: center;
  height: 29px;
  padding: 4px 0 0 2px;
  color: #000;
}
.hint {
  flex: 0 0 687px;
  padding-top: 2px;
}
.workset {
  margin: 0 9px 0 8px;
}
.workset select,
.model {
  appearance: none;
  width: 254px;
  height: 22px;
  border: 0;
  border-radius: 0;
  background: #fff;
  font: inherit;
}
.count {
  width: 36px;
  margin-left: 4px;
  padding-top: 2px;
}
.workset .glyph {
  margin-right: 5px;
}
.exclude {
  margin: 0 7px 0 10px;
}
.model {
  flex: 1;
  padding: 0 3px;
  color: #7d8288;
  opacity: 1;
}
</style>
